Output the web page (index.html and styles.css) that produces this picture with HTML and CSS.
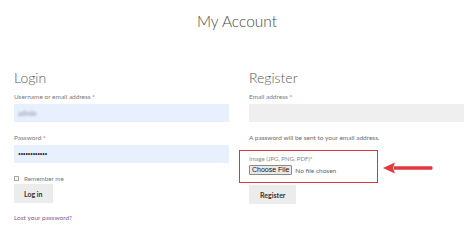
FILE: index.html
```html
<!DOCTYPE html>
<html>
<head>
    <title>My Account</title>
    <link rel="stylesheet" href="styles.css">
</head>
<body>
    <h1 class="page-title">My Account</h1>

    <div class="columns">
        <div class="col">
            <h2>Login</h2>

            <label class="field-label">Username or email address <span class="req">*</span></label>
            <div class="input input-filled"><span class="blurred">admin</span></div>

            <label class="field-label">Password <span class="req">*</span></label>
            <div class="input input-filled"><span class="dots">••••••••••••</span></div>

            <div class="remember">
                <span class="check"></span>
                <span>Remember me</span>
            </div>

            <button class="btn">Log in</button>

            <a class="lost" href="#">Lost your password?</a>
        </div>

        <div class="col">
            <h2>Register</h2>

            <label class="field-label">Email address <span class="req">*</span></label>
            <div class="input"></div>

            <p class="note">A password will be sent to your email address.</p>

            <div class="upload-row">
                <div class="upload-box">
                    <label class="upload-label">Image (JPG, PNG, PDF)<span class="req">*</span></label>
                    <div class="file">
                        <span class="file-btn">Choose File</span>
                        <span class="file-name">No file chosen</span>
                    </div>
                </div>
                <svg class="arrow" width="52" height="14" viewBox="0 0 52 14">
                    <path d="M12 5.3 H50 Q51.5 7 50 8.7 H12 Z" fill="#e0393e"/>
                    <path d="M1 7 L13 1.5 L11 7 L13 12.5 Z" fill="#e0393e"/>
                </svg>
            </div>

            <button class="btn btn-register">Register</button>
        </div>
    </div>
</body>
</html>
```

FILE: styles.css
```css
body {
    margin: 0;
    font-family: Lato, "Open Sans", sans-serif;
    color: #6d6d6d;
    background: #fff;
}
.page-title {
    margin: 9px 0 0;
    text-align: center;
    font-size: 15.5px;
    font-weight: 300;
    color: #4a4a4a;
    line-height: 24px;
}
.columns {
    display: flex;
    gap: 20px;
    padding: 0 10px 0 14px;
    margin-top: 36px;
}
.col {
    flex: 1;
    display: flex;
    flex-direction: column;
    align-items: flex-start;
}
h2 {
    margin: 0 0 5px;
    font-size: 14px;
    font-weight: 300;
    color: #5a5a5a;
    line-height: 18px;
}
.field-label {
    font-size: 6.5px;
    line-height: 9px;
    color: #7a7a7a;
    margin-bottom: 3px;
}
.req { color: #b05050; }
.input {
    align-self: stretch;
    height: 18px;
    background: #efefef;
    margin-bottom: 11px;
    display: flex;
    align-items: center;
    padding-left: 4px;
}
.input-filled { background: #e8f0fe; }
.blurred {
    font-size: 7px;
    color: #8890a0;
    filter: blur(1.2px);
}
.dots {
    font-size: 5px;
    color: #333;
    letter-spacing: -0.5px;
}
.remember {
    display: flex;
    align-items: center;
    gap: 5px;
    font-size: 6.3px;
    color: #7a7a7a;
    margin-top: -1px;
    height: 10px;
}
.check {
    width: 3px;
    height: 3px;
    border: 1px solid #aaa;
    background: #f4f4f4;
}
.btn {
    margin-top: 1px;
    height: 19px;
    padding: 0 10px;
    border: none;
    background: #ececec;
    color: #333;
    font-family: Lato, sans-serif;
    font-size: 7px;
    font-weight: 700;
    cursor: pointer;
}
.lost {
    margin-top: 11px;
    font-size: 6.5px;
    color: #8c5a86;
    text-decoration: underline;
}
.note {
    margin: 0 0 8px;
    font-size: 6.5px;
    line-height: 9px;
    color: #6d6d6d;
}
.upload-row {
    display: flex;
    align-items: center;
    margin-left: -10px;
    gap: 4px;
}
.upload-box {
    width: 128px;
    height: 28px;
    border: 1.5px solid #d9363e;
    padding: 3px 0 0 9px;
    display: flex;
    flex-direction: column;
}
.upload-label {
    font-size: 6px;
    line-height: 9px;
    color: #888;
}
.file {
    display: flex;
    align-items: center;
    gap: 3px;
    margin-top: 2px;
}
.file-btn {
    font-family: "Liberation Sans", Arial, sans-serif;
    font-size: 7px;
    line-height: 8px;
    padding: 0 2px;
    background: #e9e9e9;
    border: 1px solid #8a8a8a;
    border-radius: 1px;
    color: #111;
}
.file-name {
    font-size: 6.5px;
    color: #666;
}
.arrow { margin-top: 2px; }
.btn-register { margin-top: 2px; padding: 0 11px; }
```
